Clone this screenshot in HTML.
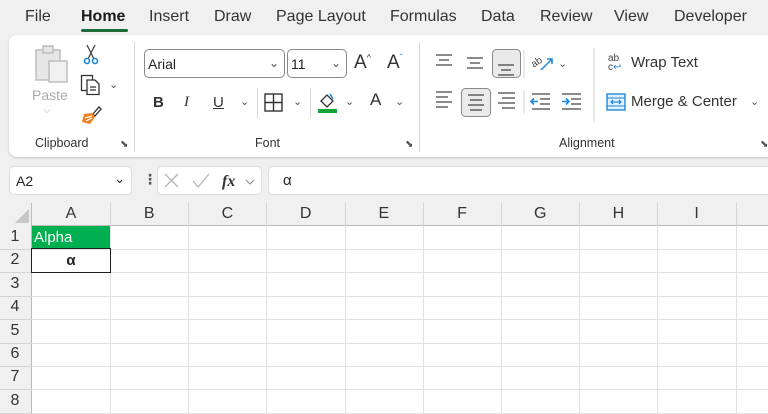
<!DOCTYPE html>
<html><head><meta charset="utf-8">
<style>
*{margin:0;padding:0;box-sizing:border-box}
body{width:768px;height:413px;overflow:hidden;background:#f0f0f0;font-family:"Segoe UI","Liberation Sans","DejaVu Sans",sans-serif;color:#242424;position:relative}
.a{position:absolute}
svg{overflow:visible}
.tab{position:absolute;top:8px;font-size:16px;color:#333}
.lbl{position:absolute;top:136px;font-size:12.5px;color:#333}
.btn{position:absolute;font-size:15px;color:#333}
.sep{position:absolute;width:1px;background:#d6d6d6}
.hdr{position:absolute;font-size:16px;color:#333;text-align:center}
.chev{font-size:11px;color:#555}
</style></head><body>
<div class="tab" style="left:25px">File</div>
<div class="tab" style="left:81px;color:#1a1a1a;font-weight:600">Home</div>
<div class="a" style="left:81px;top:29px;width:47px;height:3px;background:#1d6c38;border-radius:2px"></div>
<div class="tab" style="left:149px">Insert</div>
<div class="tab" style="left:214px">Draw</div>
<div class="tab" style="left:276px">Page Layout</div>
<div class="tab" style="left:390px">Formulas</div>
<div class="tab" style="left:481px">Data</div>
<div class="tab" style="left:540px">Review</div>
<div class="tab" style="left:614px">View</div>
<div class="tab" style="left:674px">Developer</div>

<div class="a" style="left:9px;top:35px;width:770px;height:122px;background:#fff;border-radius:8px;box-shadow:0 1px 2px rgba(0,0,0,.18)"></div>

<svg class="a" style="left:34px;top:44px" width="36" height="40" viewBox="0 0 36 40"><rect x="2" y="6" width="24" height="30" fill="#e6e6e6" stroke="#bdbdbd" stroke-width="1.5"/><rect x="9" y="2" width="10" height="7" fill="#e6e6e6" stroke="#bdbdbd" stroke-width="1.5"/><rect x="15" y="17" width="18" height="21" fill="#f0f0f0" stroke="#bdbdbd" stroke-width="1.5"/></svg>
<div class="a" style="left:32px;top:87px;font-size:14px;color:#aaa">Paste</div>
<div class="a" style="left:43px;top:105px;font-size:10px;color:#aaa">⌵</div>
<svg class="a" style="left:82px;top:44px" width="18" height="22" viewBox="0 0 18 22"><path d="M5 1 L12 15 M13 1 L6 15" stroke="#444" stroke-width="1.3" fill="none"/><circle cx="5" cy="17" r="2.5" fill="none" stroke="#1e88d8" stroke-width="1.6"/><circle cx="13" cy="17" r="2.5" fill="none" stroke="#1e88d8" stroke-width="1.6"/></svg>
<svg class="a" style="left:80px;top:74px" width="22" height="22" viewBox="0 0 22 22"><rect x="1.5" y="1.5" width="11" height="15" fill="#fff" stroke="#333" stroke-width="1.3"/><path d="M7 6 H15 L19 10 V20.5 H7 Z" fill="#fff" stroke="#333" stroke-width="1.3"/><path d="M10 13 H16 M10 16 H16" stroke="#333" stroke-width="1.2"/></svg>
<div class="a chev" style="left:109px;top:78px">⌄</div>
<svg class="a" style="left:80px;top:105px" width="22" height="20" viewBox="0 0 22 20"><path d="M13 9 L19 2 L21 4 L15 11 Z" fill="none" stroke="#333" stroke-width="1.3"/><path d="M4 9 L13 8 L15 12 L10 19 L2 17 Z" fill="#f07f1c"/><path d="M5 13 L12 11 M6 16 L12 13" stroke="#fff" stroke-width="1.2"/></svg>
<div class="lbl" style="left:35px">Clipboard</div>
<div class="a" style="left:120px;top:139px;font-size:10px;color:#555">⬊</div>
<div class="sep" style="left:134px;top:42px;height:110px"></div>

<div class="a" style="left:144px;top:49px;width:141px;height:29px;border:1px solid #8a8a8a;border-radius:5px;font-family:'Liberation Sans',sans-serif;font-size:14px;padding:6px 3px;color:#222">Arial<span class="a chev" style="right:5px;top:6px;font-size:12px">⌄</span></div>
<div class="a" style="left:287px;top:49px;width:60px;height:29px;border:1px solid #8a8a8a;border-radius:5px;font-size:14px;padding:6px 3px;color:#222">11<span class="a chev" style="right:5px;top:6px;font-size:12px">⌄</span></div>
<div class="btn" style="left:354px;top:52px;font-size:19px">A<sup style="font-size:9px">^</sup></div>
<div class="btn" style="left:387px;top:52px;font-size:19px">A<sup style="font-size:9px;color:#1e88d8">ˇ</sup></div>
<div class="btn" style="left:153px;top:94px;font-weight:700;font-family:'Liberation Sans',sans-serif">B</div>
<div class="btn" style="left:184px;top:94px;font-style:italic;font-family:'Liberation Serif',serif">I</div>
<div class="btn" style="left:213px;top:94px;text-decoration:underline">U</div>
<div class="a chev" style="left:240px;top:95px">⌄</div>
<div class="sep" style="left:257px;top:88px;height:30px"></div>
<svg class="a" style="left:264px;top:93px" width="20" height="20"><rect x="1" y="1" width="17" height="17" fill="none" stroke="#333" stroke-width="1.4"/><path d="M9.5 1 V18 M1 9.5 H18" stroke="#333" stroke-width="1.4"/></svg>
<div class="a chev" style="left:293px;top:95px">⌄</div>
<div class="sep" style="left:310px;top:88px;height:30px"></div>
<svg class="a" style="left:317px;top:91px" width="22" height="22"><path d="M4 10 L10 4 L16 10 L10 16 Z" fill="none" stroke="#333" stroke-width="1.3"/><path d="M13 3 L16 8" stroke="#1e88d8" stroke-width="1.6"/><rect x="1" y="18" width="19" height="4" fill="#13a538"/></svg>
<div class="a chev" style="left:345px;top:95px">⌄</div>
<div class="btn" style="left:370px;top:90px;font-size:17px">A</div>
<div class="a chev" style="left:395px;top:95px">⌄</div>
<div class="lbl" style="left:255px">Font</div>
<div class="a" style="left:405px;top:139px;font-size:10px;color:#555">⬊</div>
<div class="sep" style="left:419px;top:42px;height:110px"></div>

<svg class="a" style="left:434px;top:52px" width="200" height="70" viewBox="0 0 200 70">
<g stroke="#444" stroke-width="1.3">
<path d="M2 3H18M5 8H15M2 13H18"/>
<path d="M33 6H49M36 11H46M33 16H49"/>
</g>
<rect x="58.5" y="-2.5" width="28" height="28" rx="4" fill="#eaeaea" stroke="#8a8a8a"/>
<g stroke="#444" stroke-width="1.3"><path d="M64 13H80M67 18H77M64 23H80"/>
<path d="M2 40H18M2 45H14M2 50H18M2 55H14"/></g>
<rect x="27.5" y="36.5" width="29" height="28" rx="4" fill="#eaeaea" stroke="#8a8a8a"/>
<g stroke="#444" stroke-width="1.3"><path d="M34 43H50M36 48H48M34 53H50M36 58H48"/>
<path d="M64 41H81M68 46H81M64 51H81M68 56H81"/></g>
<line x1="90" y1="38" x2="90" y2="62" stroke="#d6d6d6"/>
<line x1="90" y1="-2" x2="90" y2="26" stroke="#d6d6d6"/>
<g stroke="#444" stroke-width="1.3"><path d="M98 42H116M106 47H116M106 52H116M98 57H116"/>
<path d="M128 42H147M137 47H147M137 52H147M128 57H147"/></g>
<path d="M97 49.5H104M100 46.5L97 49.5L100 52.5" stroke="#1e88d8" stroke-width="1.6" fill="none"/>
<path d="M128 49.5H135M132 46.5L135 49.5L132 52.5" stroke="#1e88d8" stroke-width="1.6" fill="none"/>
<line x1="160" y1="-4" x2="160" y2="70" stroke="#d6d6d6"/>
<text x="97" y="13" font-size="10" fill="#444" transform="rotate(-35 103 10)" font-family="Liberation Sans">ab</text>
<path d="M107 18L118 7M113 7H118V12" stroke="#1e88d8" stroke-width="1.5" fill="none"/>
</svg>
<div class="a chev" style="left:558px;top:57px">⌄</div>
<div class="a" style="left:608px;top:54px;font-size:10px;line-height:9px;color:#444">ab<br>c<span style="color:#1e88d8">↩</span></div>
<div class="btn" style="left:631px;top:54px;font-size:15px">Wrap Text</div>
<svg class="a" style="left:606px;top:93px" width="20" height="18"><rect x="1" y="1" width="18" height="16" fill="#e3f1fb" stroke="#1e88d8" stroke-width="1.4"/><path d="M1 5H19M1 13H19" stroke="#1e88d8"/><path d="M5 9H15M7 7L5 9L7 11M13 7L15 9L13 11" stroke="#1e88d8" stroke-width="1.2" fill="none"/></svg>
<div class="btn" style="left:631px;top:93px;font-size:15px">Merge &amp; Center</div>
<div class="a chev" style="left:750px;top:95px">⌄</div>
<div class="lbl" style="left:559px">Alignment</div>
<div class="a" style="left:760px;top:139px;font-size:10px;color:#555">⬊</div>

<div class="a" style="left:9px;top:166px;width:123px;height:29px;background:#fff;border:1px solid #dedede;border-radius:5px;font-size:14px;padding:6px 6px">A2<span class="a" style="right:6px;top:4px;font-size:13px">⌄</span></div>
<div class="a" style="left:143px;top:171px;font-size:14px;font-weight:700;color:#555">⋮</div>
<div class="a" style="left:157px;top:166px;width:105px;height:29px;background:#fff;border:1px solid #dedede;border-radius:5px"></div>
<svg class="a" style="left:162px;top:171px" width="100" height="20"><path d="M3 3L16 16M16 3L3 16" stroke="#b5b5b5" stroke-width="1.3"/><path d="M31 10L36 16L47 3" stroke="#b5b5b5" stroke-width="1.3" fill="none"/><text x="60" y="15" font-family="Liberation Serif" font-style="italic" font-weight="700" font-size="16" fill="#333">fx</text><path d="M84 9L88 13L92 9" stroke="#888" fill="none"/></svg>
<div class="a" style="left:268px;top:166px;width:510px;height:29px;background:#fff;border:1px solid #dedede;border-radius:5px;font-size:15px;padding:5px 14px">α</div>

<div class="a" style="left:0;top:203px;width:768px;height:210px;background:#fff"></div>
<div class="a" style="left:0;top:203px;width:768px;height:23px;background:#f0f0f0;border-bottom:1px solid #bbb"></div>
<div class="a" style="left:0;top:203px;width:32px;height:210px;background:#f0f0f0;border-right:1px solid #bbb"></div>
<svg class="a" style="left:14px;top:208px" width="16" height="16"><path d="M15 1V15H1Z" fill="#c6c6c6"/></svg>
<div id="g"></div>
<div class="a" style="left:32px;top:226px;width:78px;height:23px;background:#00b050;color:#fff;font-family:'Liberation Sans',sans-serif;font-size:15px;padding:3px 2px">Alpha</div>
<div class="a" style="left:31px;top:248px;width:80px;height:25px;border:1.5px solid #1f1f1f;font-family:'Liberation Sans',sans-serif;font-size:15px;text-align:center;font-weight:700;line-height:23px">α</div>
<script>
var g=document.getElementById('g'),h='';
var cols=['A','B','C','D','E','F','G','H','I'];
for(var i=0;i<10;i++){var x=32+i*78.2;
h+='<div class="a" style="left:'+(x+78)+'px;top:203px;width:1px;height:23px;background:#d4d4d4"></div>';
h+='<div class="a" style="left:'+(x+78)+'px;top:226px;width:1px;height:187px;background:#e1e1e1"></div>';
if(i<9)h+='<div class="hdr" style="left:'+x+'px;top:205px;width:78px">'+cols[i]+'</div>';}
for(var r=0;r<8;r++){var y=226+r*23.4;
h+='<div class="a" style="left:0;top:'+(y+23)+'px;width:32px;height:1px;background:#d4d4d4"></div>';
h+='<div class="a" style="left:32px;top:'+(y+23)+'px;width:736px;height:1px;background:#e1e1e1"></div>';
h+='<div class="hdr" style="left:0;top:'+(y+2)+'px;width:30px">'+(r+1)+'</div>';}
g.innerHTML=h;
</script>
</body></html>
